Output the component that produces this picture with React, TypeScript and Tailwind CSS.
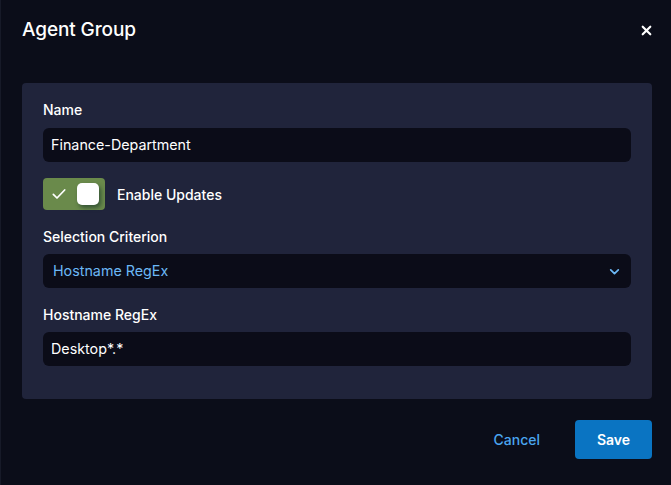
import React, { useState } from "react";

function CheckIcon() {
  return (
    <svg viewBox="0 0 24 24" className="h-[16px] w-[16px]" fill="none" stroke="currentColor" strokeWidth={2.6} strokeLinecap="round" strokeLinejoin="round">
      <path d="M3.5 12.5l5.5 5.5L20.5 6" />
    </svg>
  );
}

function ChevronDown() {
  return (
    <svg viewBox="0 0 24 24" className="h-[13px] w-[13px]" fill="none" stroke="currentColor" strokeWidth={3.2} strokeLinecap="round" strokeLinejoin="round">
      <path d="M5 9l7 7 7-7" />
    </svg>
  );
}

function CloseIcon() {
  return (
    <svg viewBox="0 0 24 24" className="h-[13px] w-[13px]" fill="none" stroke="currentColor" strokeWidth={4} strokeLinecap="round">
      <path d="M5 5l14 14M19 5L5 19" />
    </svg>
  );
}

export default function App() {
  const [enabled, setEnabled] = useState(true);

  return (
    <div
      className="flex h-[485px] w-[671px] flex-col border-l border-[#171a28] bg-[#0b0d19] text-white"
      style={{ fontFamily: "Inter, 'Noto Sans', sans-serif" }}
    >
      {/* Header */}
      <div className="flex h-[60px] items-center justify-between pl-[21px] pr-[18px] pt-[1px]">
        <h2 className="text-[19px] font-medium tracking-[-0.1px]">Agent Group</h2>
        <button className="text-white" aria-label="Close">
          <CloseIcon />
        </button>
      </div>

      {/* Body card */}
      <div className="ml-[21px] mr-[19px] mt-[23px] rounded-[4px] bg-[#20243b] px-[21px] pb-[33px] pt-[17px]">
        <label className="block text-[14px] font-medium leading-[20px]">Name</label>
        <div className="mt-[8px] flex h-[34px] items-center rounded-[6px] bg-[#0b0c18] px-[8px] text-[14.3px]">
          Finance-Department
        </div>

        <div className="mt-[16px] flex items-center gap-[12px]">
          <button
            onClick={() => setEnabled(!enabled)}
            className="flex h-[32px] w-[62px] items-center justify-between rounded-[4px] bg-[#6a8a4b] pl-[8px] pr-[6px]"
          >
            <span className="text-white">
              <CheckIcon />
            </span>
            <span className="h-[22px] w-[22px] rounded-[5px] bg-white shadow-[2px_3px_4px_rgba(20,50,40,0.6)]" />
          </button>
          <span className="text-[14px] font-medium">Enable Updates</span>
        </div>

        <label className="mt-[17px] block text-[14px] font-medium leading-[20px]">Selection Criterion</label>
        <div className="mt-[7px] flex h-[34px] items-center justify-between rounded-[6px] bg-[#0b0c18] pl-[10px] pr-[10px] text-[14.3px] text-[#6cb8f6]">
          <span>Hostname RegEx</span>
          <ChevronDown />
        </div>

        <label className="mt-[17px] block text-[14px] font-medium leading-[20px]">Hostname RegEx</label>
        <div className="mt-[7px] flex h-[34px] items-center rounded-[6px] bg-[#0b0c18] px-[8px] text-[14.3px]">
          Desktop*.*
        </div>
      </div>

      {/* Footer */}
      <div className="mt-[21px] flex items-center justify-end gap-[35px] pr-[19px]">
        <button className="text-[14px] font-medium text-[#4aa5f0]">Cancel</button>
        <button className="h-[39px] w-[77px] rounded-[4px] bg-[#0a74c2] text-[14px] font-semibold text-white">
          Save
        </button>
      </div>
    </div>
  );
}
